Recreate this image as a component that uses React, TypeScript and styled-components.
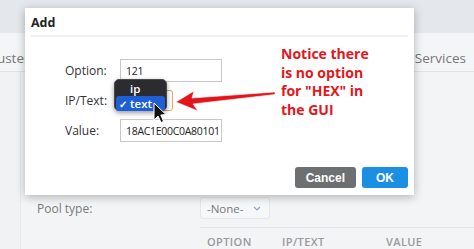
import React from 'react';
import styled, { createGlobalStyle } from 'styled-components';

const GlobalStyle = createGlobalStyle`
  html, body {
    margin: 0;
    padding: 0;
    width: 474px;
    height: 249px;
    overflow: hidden;
    background: #f3f4f6;
    font-family: "Open Sans", "Liberation Sans", sans-serif;
  }
`;

const Page = styled.div`
  position: relative;
  width: 474px;
  height: 249px;
  overflow: hidden;
  display: flex;
  flex-direction: column;
  background: #f3f4f6;
`;

const TopBar = styled.div`
  height: 35px;
  background: #e4e7ec;
`;

const TabRow = styled.div`
  height: 40px;
  display: flex;
  align-items: center;
  justify-content: space-between;
  background: #f4f5f7;
  border-bottom: 1px solid #e1e3e7;
  padding-right: 8px;
  font-size: 13.5px;
  color: #777;
`;

const Tab = styled.span<{ $clip?: number }>`
  margin-left: ${p => (p.$clip ? -p.$clip : 0)}px;
  padding-top: 11px;
`;

const Body = styled.div`
  flex: 1;
  display: flex;
`;

const Sidebar = styled.div`
  width: 20px;
  border-right: 1px solid #e6e8eb;
  background: #f1f2f4;
`;

const Content = styled.div`
  flex: 1;
  padding: 125px 0 0 16px;
  display: flex;
  flex-direction: column;
`;

const FieldRow = styled.div`
  display: flex;
  align-items: center;
  height: 22px;
`;

const PageLabel = styled.span`
  width: 163px;
  font-size: 12px;
  color: #7a7a7a;
`;

const PageSelect = styled.div`
  width: 70px;
  height: 22px;
  box-sizing: border-box;
  display: flex;
  align-items: center;
  justify-content: space-between;
  padding: 0 8px 0 6px;
  background: #f6f7f9;
  border: 1px solid #e4e6e9;
  border-radius: 3px;
  font-size: 11.5px;
  color: #777;
`;

const TableHead = styled.div`
  margin: 8px 0 0 163px;
  border-top: 1px solid #e2e4e7;
  display: grid;
  grid-template-columns: 75px 104px 1fr;
  padding: 6px 0 0 7px;
  font-size: 11px;
  font-weight: 600;
  letter-spacing: 0.4px;
  color: #9a9a9a;
`;

const Dialog = styled.div`
  position: absolute;
  left: 25px;
  top: 8px;
  width: 389px;
  height: 187px;
  background: #fff;
  box-shadow: 0 2px 9px rgba(0, 0, 0, 0.28);
  display: flex;
  flex-direction: column;
`;

const DialogHeader = styled.div`
  height: 26px;
  margin: 0 6px;
  display: flex;
  align-items: center;
  padding-top: 1px;
  border-bottom: 2px solid #f0f1f2;
  font-size: 12.5px;
  font-weight: 700;
  color: #222;
`;

const Form = styled.div`
  position: relative;
  flex: 1;
  padding: 22px 0 0 40px;
  display: flex;
  flex-direction: column;
  gap: 7px;
`;

const FormRow = styled.div`
  display: flex;
  align-items: center;
  height: 23px;
`;

const FormLabel = styled.span`
  width: 55px;
  font-size: 12px;
  color: #333;
`;

const TextInput = styled.div`
  width: 102px;
  height: 23px;
  box-sizing: border-box;
  border: 1px solid #c8c8c8;
  display: flex;
  align-items: center;
  padding-left: 5px;
  font-size: 10.5px;
  letter-spacing: -0.3px;
  color: #222;
  white-space: nowrap;
  overflow: hidden;
`;

const SelectBox = styled.div`
  width: 53px;
  height: 21px;
  box-sizing: border-box;
  border: 1px solid #e6a766;
  border-radius: 3px;
  background: #fff;
`;

const Menu = styled.div`
  position: absolute;
  left: 89px;
  top: 42px;
  width: 53px;
  height: 32px;
  box-sizing: border-box;
  background: #2c2c30;
  border: 1px solid #4a4a4e;
  border-radius: 5px;
  padding: 1px;
  display: flex;
  flex-direction: column;
  box-shadow: 0 2px 5px rgba(0, 0, 0, 0.4);
`;

const MenuItem = styled.div<{ $active?: boolean }>`
  height: 15px;
  display: flex;
  align-items: center;
  padding-left: 3px;
  border-radius: 3px;
  background: ${p => (p.$active ? '#1f5fd6' : 'transparent')};
  color: #fff;
  font-size: 11.5px;
  font-weight: 600;
`;

const Check = styled.span`
  width: 11px;
  font-size: 10px;
`;

const Footer = styled.div`
  display: flex;
  justify-content: flex-end;
  gap: 6px;
  padding: 0 6px 7px 0;
`;

const Button = styled.div<{ $primary?: boolean }>`
  height: 21px;
  padding: 0 ${p => (p.$primary ? 14 : 11)}px;
  display: flex;
  align-items: center;
  border-radius: 3px;
  background: ${p => (p.$primary ? '#1a8fe3' : '#6e6f71')};
  color: #fff;
  font-family: "Liberation Sans", Arial, sans-serif;
  font-size: 12px;
  font-weight: 700;
`;

const Note = styled.div`
  position: absolute;
  left: 281px;
  top: 45px;
  font-size: 14px;
  font-weight: 700;
  line-height: 18.5px;
  color: #e3161d;
  text-shadow: 0 0 2px #fff, 0 0 1px #fff;
  white-space: nowrap;
`;

const Overlay = styled.svg`
  position: absolute;
  left: 0;
  top: 0;
  pointer-events: none;
`;

export default function App() {
  return (
    <>
      <GlobalStyle />
      <Page>
        <TopBar />
        <TabRow>
          <Tab $clip={15}>Cluster</Tab>
          <Tab>Additional Services</Tab>
        </TabRow>
        <Body>
          <Sidebar />
          <Content>
            <FieldRow>
              <PageLabel>Pool type:</PageLabel>
              <PageSelect>
                <span>-None-</span>
                <svg width="8" height="5" viewBox="0 0 8 5">
                  <path d="M1 1l3 3 3-3" fill="none" stroke="#8aa6c6" strokeWidth="1.2" />
                </svg>
              </PageSelect>
            </FieldRow>
            <TableHead>
              <span>OPTION</span>
              <span>IP/TEXT</span>
              <span>VALUE</span>
            </TableHead>
          </Content>
        </Body>

        <Dialog>
          <DialogHeader>Add</DialogHeader>
          <Form>
            <FormRow>
              <FormLabel>Option:</FormLabel>
              <TextInput>121</TextInput>
            </FormRow>
            <FormRow>
              <FormLabel>IP/Text:</FormLabel>
              <SelectBox />
            </FormRow>
            <FormRow>
              <FormLabel>Value:</FormLabel>
              <TextInput>18AC1E00C0A80101</TextInput>
            </FormRow>
            <Menu>
              <MenuItem>
                <Check />ip
              </MenuItem>
              <MenuItem $active>
                <Check>✓</Check>text
              </MenuItem>
            </Menu>
          </Form>
          <Footer>
            <Button>Cancel</Button>
            <Button $primary>OK</Button>
          </Footer>
        </Dialog>

        <Note>
          Notice there
          <br />
          is no option
          <br />
          for "HEX" in
          <br />
          the GUI
        </Note>

        <Overlay width="474" height="249" viewBox="0 0 474 249">
          <path
            d="M176 102 L194 91 L192 98 L275 92 L275 94.5 L193 104 L198 111 Z"
            fill="#e3141b"
            stroke="#fff"
            strokeWidth="0.6"
          />
          <path
            d="M154 103 L154 120 L158 116 L161 122.5 L163.6 121.4 L160.8 115 L166 114.6 Z"
            fill="#111"
            stroke="#fff"
            strokeWidth="1"
            strokeLinejoin="round"
          />
        </Overlay>
      </Page>
    </>
  );
}
